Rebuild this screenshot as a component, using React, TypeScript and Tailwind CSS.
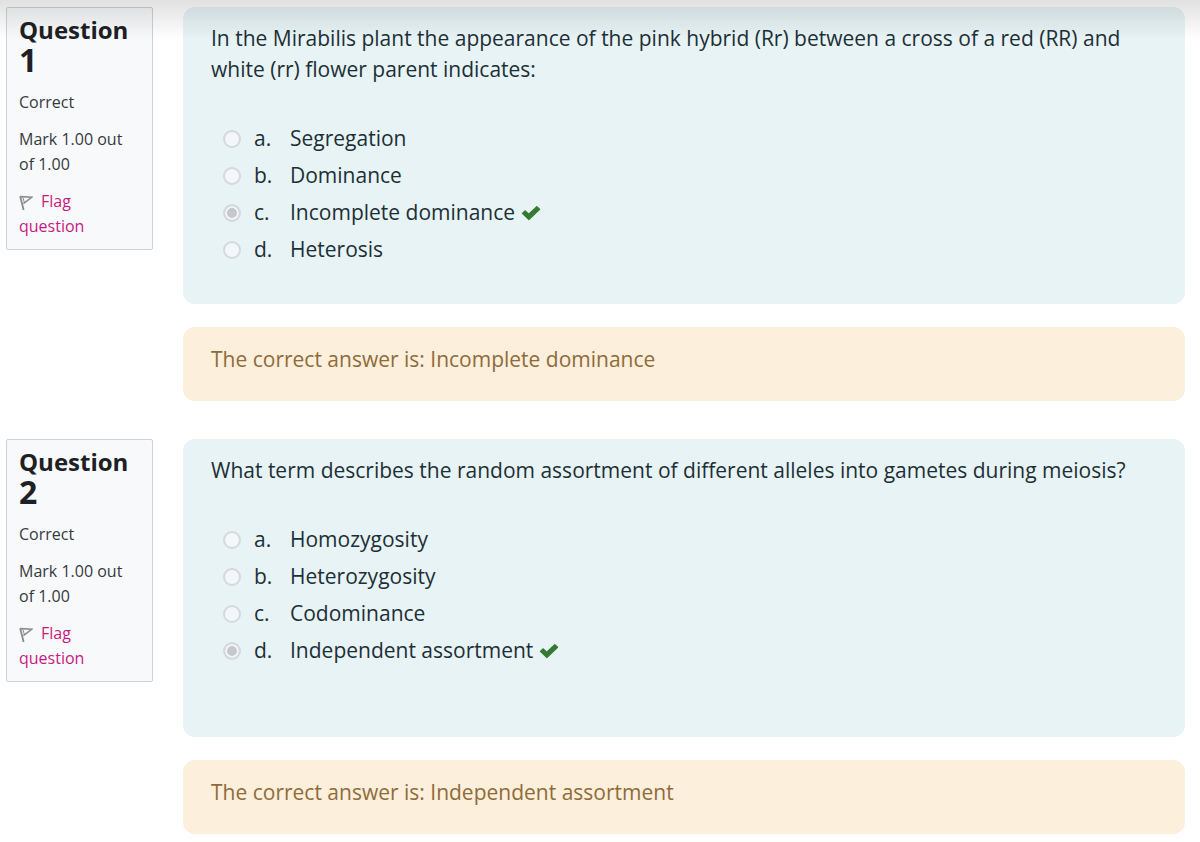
import React from "react";

type Question = {
  number: number;
  text: string;
  options: string[];
  selected: number;
  tail: string;
};

const questions: Question[] = [
  {
    number: 1,
    text: "In the Mirabilis plant the appearance of the pink hybrid (Rr) between a cross of a red (RR) and white (rr) flower parent indicates:",
    options: ["Segregation", "Dominance", "Incomplete dominance", "Heterosis"],
    selected: 2,
    tail: "pb-9",
  },
  {
    number: 2,
    text: "What term describes the random assortment of different alleles into gametes during meiosis?",
    options: ["Homozygosity", "Heterozygosity", "Codominance", "Independent assortment"],
    selected: 3,
    tail: "pb-[68px]",
  },
];

function Check() {
  return (
    <svg viewBox="0 0 20 16" className="h-4 w-5 shrink-0" role="img" aria-label="Correct">
      <path
        d="M1.4 8.4 L4 5.8 L7.7 9.2 L15.8 1.6 L18.6 4.2 L7.9 14.6 Z"
        fill="#357a32"
        stroke="#357a32"
        strokeWidth="1.2"
        strokeLinejoin="round"
      />
    </svg>
  );
}

function Flag() {
  return (
    <svg viewBox="0 0 14 16" className="mr-2 inline-block h-4 w-[14px]" fill="none" stroke="#8a8a8a" aria-hidden="true">
      <path d="M1.2 1.2 L4.6 15" strokeWidth="1.8" />
      <path d="M1.2 1.5 L12.8 2.2 L4.4 8.6" strokeWidth="1.4" />
      <path d="M3.6 1.8 L5.4 7.4" strokeWidth="1" />
    </svg>
  );
}

function InfoPanel({ number }: { number: number }) {
  return (
    <aside className="w-[147px] shrink-0 rounded-xs border border-[#cdd2d8] bg-[#f8f9fb] px-3 pt-2 pb-[10px] text-[#343a40]">
      <h3 className="text-2xl/[28px] font-bold text-[#1d2125]">
        Question <span className="block text-[32px]/[32px]">{number}</span>
      </h3>
      <p className="mt-[14px] text-base/[25px]">Correct</p>
      <p className="mt-3 text-base/[25px]">Mark 1.00 out of 1.00</p>
      <a href="#flag" className="mt-3 block text-base/[25px] text-[#c8197f]">
        <Flag />
        Flag question
      </a>
    </aside>
  );
}

function QuestionBlock({ q }: { q: Question }) {
  return (
    <section className="flex items-start gap-[30px]">
      <InfoPanel number={q.number} />
      <div className="min-w-0 flex-1">
        <div className={`rounded-xl bg-[#e7f3f5] px-7 pt-4 text-[#1d2f36] ${q.tail}`}>
          <p className="text-[21px]/[31px]">{q.text}</p>
          <fieldset className="mt-[35px] pl-3" aria-label={`Question ${q.number} answer`}>
            {q.options.map((option, i) => (
              <label key={option} className="flex h-[37px] items-center text-[21px]">
                <input
                  type="radio"
                  name={`question-${q.number}`}
                  defaultChecked={i === q.selected}
                  disabled
                  className="size-[18px] shrink-0 appearance-none rounded-full border-2 border-[#d5d9dc] bg-[#f3f7f9] checked:bg-[#c6c7cb] checked:shadow-[inset_0_0_0_2px_#f3f7f9]"
                />
                <span className="ml-[13px] w-9 shrink-0">{"abcd"[i]}.</span>
                <span className="mr-[6px]">{option}</span>
                {i === q.selected && <Check />}
              </label>
            ))}
          </fieldset>
        </div>
        <div className="mt-[23px] rounded-xl bg-[#fcefdc] px-7 pt-4 pb-[26px] text-[21px]/[32px] text-[#8f6b3a]">
          The correct answer is: {q.options[q.selected]}
        </div>
      </div>
    </section>
  );
}

export default function App() {
  return (
    <main className="relative min-h-screen bg-white pt-[7px] pr-[15px] pl-[6px] font-['Open_Sans',sans-serif]">
      <div className="flex flex-col gap-[38px]">
        {questions.map((q) => (
          <QuestionBlock key={q.number} q={q} />
        ))}
      </div>
      <div className="pointer-events-none absolute inset-x-0 top-0 h-10 bg-linear-to-b from-black/12 to-transparent" />
    </main>
  );
}
